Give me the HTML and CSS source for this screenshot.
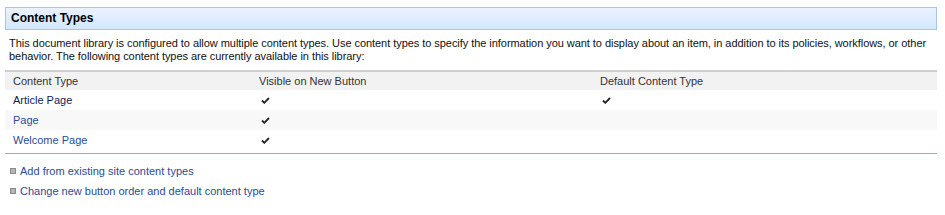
FILE: index.html
```html
<!DOCTYPE html>
<html lang="en">
<head>
    <meta charset="UTF-8">
    <title>Content Types</title>
    <link rel="stylesheet" href="styles.css">
</head>
<body>

<div class="section">
    <div class="section-header">Content Types</div>

    <div class="section-desc">
        This document library is configured to allow multiple content types. Use content types to specify the information you want to display about an item, in addition to its policies, workflows, or other behavior. The following content types are currently available in this library:
    </div>

    <div class="table-wrap">
        <table class="ct-table">
            <thead>
                <tr>
                    <th class="col-name">Content Type</th>
                    <th class="col-visible">Visible on New Button</th>
                    <th>Default Content Type</th>
                </tr>
            </thead>
            <tbody>
                <tr>
                    <td><a href="#" class="visited">Article Page</a></td>
                    <td><svg class="check" width="9" height="7" viewBox="0 0 9 7"><path d="M1 3.5 L3.3 5.8 L8 1" fill="none" stroke="#222" stroke-width="1.8"/></svg></td>
                    <td><svg class="check" width="9" height="7" viewBox="0 0 9 7"><path d="M1 3.5 L3.3 5.8 L8 1" fill="none" stroke="#222" stroke-width="1.8"/></svg></td>
                </tr>
                <tr class="alt">
                    <td><a href="#">Page</a></td>
                    <td><svg class="check" width="9" height="7" viewBox="0 0 9 7"><path d="M1 3.5 L3.3 5.8 L8 1" fill="none" stroke="#222" stroke-width="1.8"/></svg></td>
                    <td></td>
                </tr>
                <tr>
                    <td><a href="#">Welcome Page</a></td>
                    <td><svg class="check" width="9" height="7" viewBox="0 0 9 7"><path d="M1 3.5 L3.3 5.8 L8 1" fill="none" stroke="#222" stroke-width="1.8"/></svg></td>
                    <td></td>
                </tr>
            </tbody>
        </table>
    </div>

    <ul class="link-list">
        <li><a href="#">Add from existing site content types</a></li>
        <li><a href="#">Change new button order and default content type</a></li>
    </ul>
</div>

</body>
</html>
```

FILE: styles.css
```css
body {
    font-family: "Liberation Sans", Arial, sans-serif;
    font-size: 11px;
    color: #000;
    background-color: #fff;
    margin: 0;
    padding: 7px 8px 0 5px;
}
a {
    color: #2a4c96;
    text-decoration: none;
}
a.visited {
    color: #0c1c5a;
}
.section-header {
    background: linear-gradient(#eaf2ff, #d5e6ff);
    border: 1px solid #a9c4e6;
    height: 21px;
    line-height: 21px;
    padding-left: 5px;
    font-weight: bold;
    font-size: 12px;
    color: #000;
}
.section-desc {
    padding: 7px 0 0 4px;
    line-height: 13px;
    height: 33px;
    letter-spacing: -0.05px;
    color: #111;
}
.table-wrap {
    border-top: 2px solid #cfcfcf;
    border-bottom: 1px solid #93a9de;
    padding-bottom: 3px;
}
.ct-table {
    width: 100%;
    border-collapse: collapse;
}
.ct-table th {
    background-color: #f2f2f2;
    font-weight: normal;
    text-align: left;
    color: #333;
    height: 18px;
    padding: 0 0 0 8px;
}
.ct-table td {
    height: 20px;
    padding: 0 0 0 8px;
}
.ct-table tr.alt td {
    background-color: #f8f8f8;
}
.col-name {
    width: 238px;
}
.col-visible {
    width: 333px;
}
.check {
    display: block;
    margin-left: 2px;
}
.link-list {
    list-style: none;
    margin: 0;
    padding: 10px 0 0 5px;
}
.link-list li {
    height: 20px;
    line-height: 14px;
    position: relative;
    padding-left: 10px;
}
.link-list li::before {
    content: "";
    position: absolute;
    left: 0;
    top: 4px;
    width: 4px;
    height: 4px;
    background: #b5b5b5;
    border: 1px solid #8a8a8a;
}
```
